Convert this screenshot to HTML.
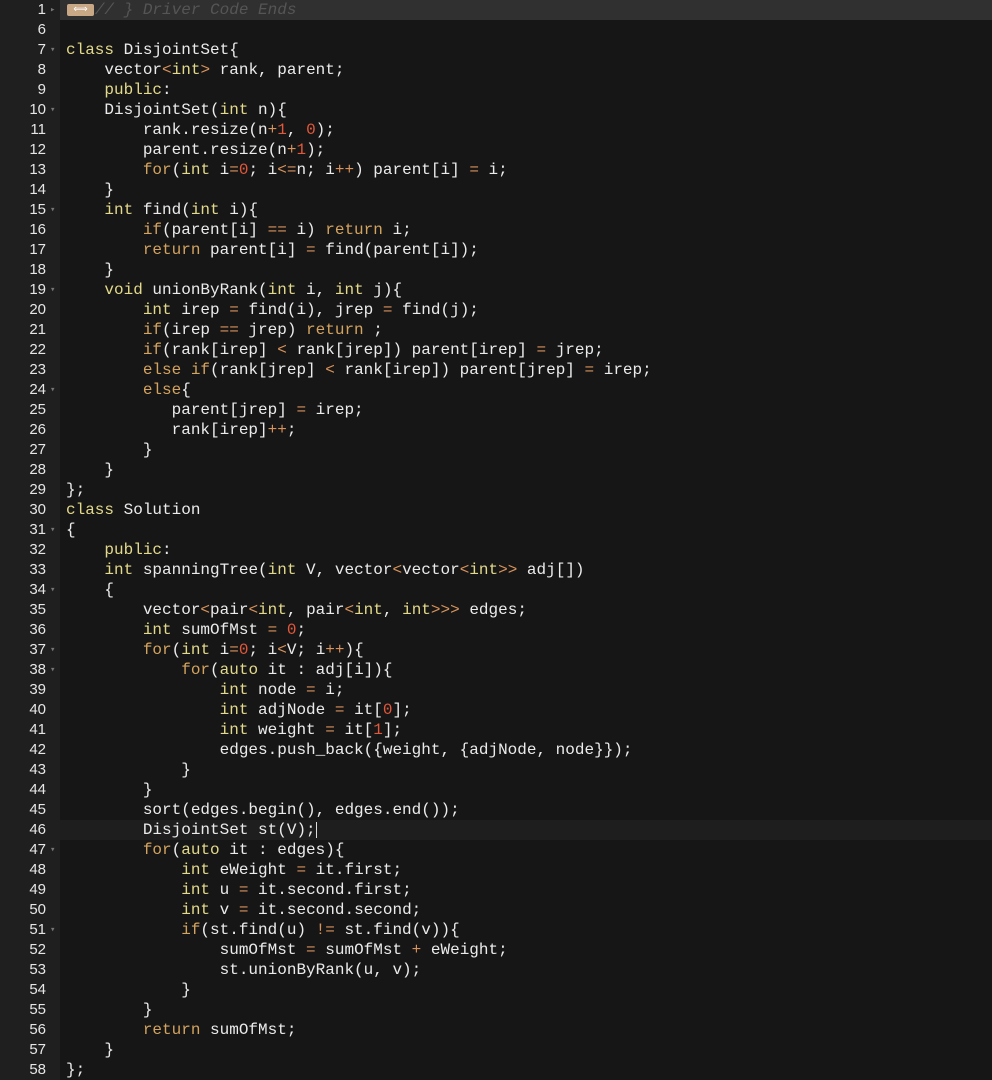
<!DOCTYPE html>
<html><head><meta charset="utf-8"><style>
html,body{margin:0;padding:0;background:#161616;width:992px;height:1080px;overflow:hidden}
#g{position:absolute;left:0;top:0;width:60px;height:1080px;background:#1f1f1f}
.l{position:absolute;left:0;width:992px;height:20px;font:16px/20px "Liberation Mono",monospace;color:#ebebeb;white-space:pre}
.l .num{position:absolute;left:0;width:46px;text-align:right;color:#e6e6e6;font-family:"Liberation Sans",sans-serif;font-size:15px}
.l .f{position:absolute;left:50px;top:0;color:#777;font-size:9px}
.l .c{position:absolute;left:66px;top:0}
.t{color:#e3d98a}.k{color:#d4a35e}.o{color:#d8925a}.n{color:#e2583a}
.cm{color:#555;font-style:italic}
</style></head><body>
<div id="g"></div>
<div style="position:absolute;left:60px;top:0;width:932px;height:20px;background:#303030"></div>
<div style="position:absolute;left:60px;top:820px;width:932px;height:20px;background:#1e1e1e"></div>
<div style="position:absolute;left:67px;top:4px;width:27px;height:12px;background:#c9a886;border-radius:2px;font:10px/12px 'Liberation Sans';color:#fff;text-align:center">⟺</div>
<div style="position:absolute;left:316px;top:822px;width:1px;height:16px;background:#ddd"></div>
<div id="code"></div>
<script>
const L=[
[1,'   <span class="cm">// } Driver Code Ends</span>',1],
[6,''],
[7,'<span class="t">class</span> DisjointSet{',1],
[8,'    vector<span class="o">&lt;</span><span class="t">int</span><span class="o">&gt;</span> rank, parent;'],
[9,'    <span class="t">public</span>:'],
[10,'    DisjointSet(<span class="t">int</span> n){',1],
[11,'        rank.resize(n<span class="o">+</span><span class="n">1</span>, <span class="n">0</span>);'],
[12,'        parent.resize(n<span class="o">+</span><span class="n">1</span>);'],
[13,'        <span class="k">for</span>(<span class="t">int</span> i<span class="o">=</span><span class="n">0</span>; i<span class="o">&lt;=</span>n; i<span class="o">++</span>) parent[i] <span class="o">=</span> i;'],
[14,'    }'],
[15,'    <span class="t">int</span> find(<span class="t">int</span> i){',1],
[16,'        <span class="k">if</span>(parent[i] <span class="o">==</span> i) <span class="k">return</span> i;'],
[17,'        <span class="k">return</span> parent[i] <span class="o">=</span> find(parent[i]);'],
[18,'    }'],
[19,'    <span class="t">void</span> unionByRank(<span class="t">int</span> i, <span class="t">int</span> j){',1],
[20,'        <span class="t">int</span> irep <span class="o">=</span> find(i), jrep <span class="o">=</span> find(j);'],
[21,'        <span class="k">if</span>(irep <span class="o">==</span> jrep) <span class="k">return</span> ;'],
[22,'        <span class="k">if</span>(rank[irep] <span class="o">&lt;</span> rank[jrep]) parent[irep] <span class="o">=</span> jrep;'],
[23,'        <span class="k">else</span> <span class="k">if</span>(rank[jrep] <span class="o">&lt;</span> rank[irep]) parent[jrep] <span class="o">=</span> irep;'],
[24,'        <span class="k">else</span>{',1],
[25,'           parent[jrep] <span class="o">=</span> irep;'],
[26,'           rank[irep]<span class="o">++</span>;'],
[27,'        }'],
[28,'    }'],
[29,'};'],
[30,'<span class="t">class</span> Solution'],
[31,'{',1],
[32,'    <span class="t">public</span>:'],
[33,'    <span class="t">int</span> spanningTree(<span class="t">int</span> V, vector<span class="o">&lt;</span>vector<span class="o">&lt;</span><span class="t">int</span><span class="o">&gt;&gt;</span> adj[])'],
[34,'    {',1],
[35,'        vector<span class="o">&lt;</span>pair<span class="o">&lt;</span><span class="t">int</span>, pair<span class="o">&lt;</span><span class="t">int</span>, <span class="t">int</span><span class="o">&gt;&gt;&gt;</span> edges;'],
[36,'        <span class="t">int</span> sumOfMst <span class="o">=</span> <span class="n">0</span>;'],
[37,'        <span class="k">for</span>(<span class="t">int</span> i<span class="o">=</span><span class="n">0</span>; i<span class="o">&lt;</span>V; i<span class="o">++</span>){',1],
[38,'            <span class="k">for</span>(<span class="t">auto</span> it : adj[i]){',1],
[39,'                <span class="t">int</span> node <span class="o">=</span> i;'],
[40,'                <span class="t">int</span> adjNode <span class="o">=</span> it[<span class="n">0</span>];'],
[41,'                <span class="t">int</span> weight <span class="o">=</span> it[<span class="n">1</span>];'],
[42,'                edges.push_back({weight, {adjNode, node}});'],
[43,'            }'],
[44,'        }'],
[45,'        sort(edges.begin(), edges.end());'],
[46,'        DisjointSet st(V);'],
[47,'        <span class="k">for</span>(<span class="t">auto</span> it : edges){',1],
[48,'            <span class="t">int</span> eWeight <span class="o">=</span> it.first;'],
[49,'            <span class="t">int</span> u <span class="o">=</span> it.second.first;'],
[50,'            <span class="t">int</span> v <span class="o">=</span> it.second.second;'],
[51,'            <span class="k">if</span>(st.find(u) <span class="o">!=</span> st.find(v)){',1],
[52,'                sumOfMst <span class="o">=</span> sumOfMst <span class="o">+</span> eWeight;'],
[53,'                st.unionByRank(u, v);'],
[54,'            }'],
[55,'        }'],
[56,'        <span class="k">return</span> sumOfMst;'],
[57,'    }'],
[58,'};']
];
let h='';
L.forEach((r,i)=>{
 h+='<div class="l" style="top:'+(i*20)+'px"><span class="num">'+r[0]+'</span>'+(r[2]?'<span class="f">'+(r[0]==1?'▸':'▾')+'</span>':'')+'<span class="c">'+r[1]+'</span></div>';
});
document.getElementById('code').innerHTML=h;
</script>
</body></html>
